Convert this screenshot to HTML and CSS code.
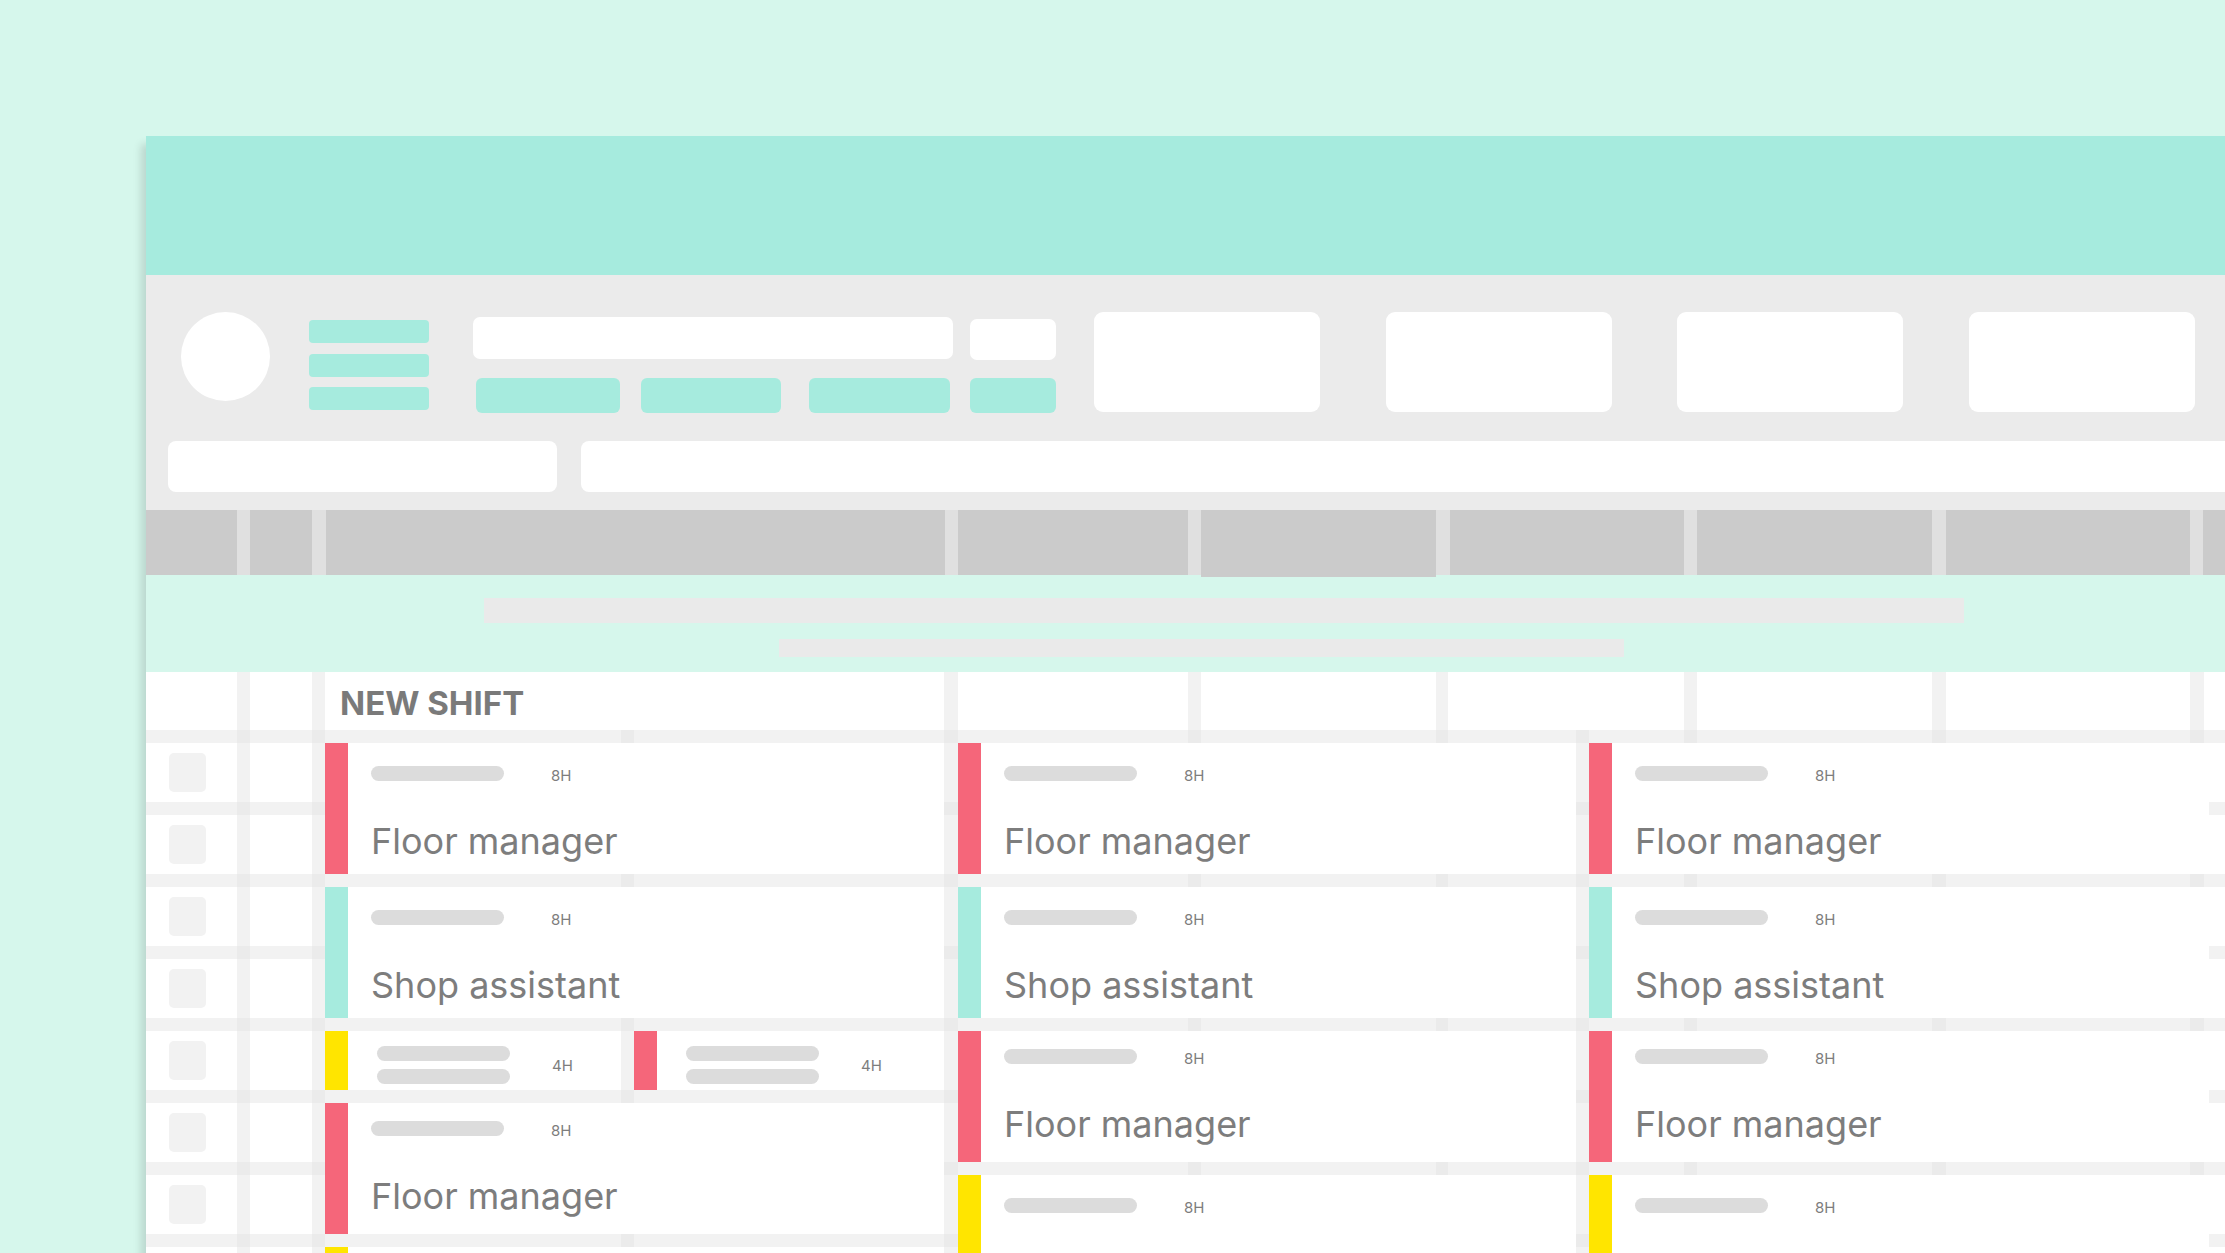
FILE: index.html
```html
<!DOCTYPE html>
<html lang="en">
<head>
<meta charset="utf-8">
<title>Shift planner</title>
<link rel="stylesheet" href="styles.css">
</head>
<body>
<div class="panel">
  <div class="topbar"></div>

  <div class="toolbar">
    <div class="toolbar__main">
      <div class="avatar"></div>
      <div class="menu"><span></span><span></span><span></span></div>
      <div class="controls">
        <div class="controls__top">
          <div class="field field--wide"></div>
          <div class="field field--small"></div>
        </div>
        <div class="controls__bottom">
          <div class="btn btn--1"></div>
          <div class="btn btn--2"></div>
          <div class="btn btn--3"></div>
          <div class="btn btn--4"></div>
        </div>
      </div>
      <div class="tiles">
        <div class="tile"></div>
        <div class="tile"></div>
        <div class="tile"></div>
        <div class="tile"></div>
      </div>
    </div>
    <div class="toolbar__search">
      <div class="input input--short"></div>
      <div class="input input--long"></div>
    </div>
  </div>

  <div class="days">
    <div class="day"></div>
    <div class="day"></div>
    <div class="day"></div>
    <div class="day"></div>
    <div class="day day--tall"></div>
    <div class="day"></div>
    <div class="day"></div>
    <div class="day"></div>
    <div class="day"></div>
  </div>

  <div class="notice">
    <div class="notice__bar notice__bar--1"></div>
    <div class="notice__bar notice__bar--2"></div>
  </div>

  <div class="board">
    <div class="hline hl-1"></div>
    <div class="hline hl-2"></div>
    <div class="hline hl-3"></div>
    <div class="hline hl-4"></div>
    <div class="hline hl-5"></div>
    <div class="hline hl-6"></div>
    <div class="hline hl-7"></div>
    <div class="hline hl-8"></div>

    <div class="vline vl-1"></div>
    <div class="vline vl-2"></div>
    <div class="vline vline--inner vl-3"></div>
    <div class="vline vl-4"></div>
    <div class="vline vl-5"></div>
    <div class="vline vl-6"></div>
    <div class="vline vline--inner vl-7"></div>
    <div class="vline vl-8"></div>
    <div class="vline vl-9"></div>
    <div class="vline vl-10"></div>

    <div class="board__title">NEW SHIFT</div>

    <div class="slot s-1"></div>
    <div class="slot s-2"></div>
    <div class="slot s-3"></div>
    <div class="slot s-4"></div>
    <div class="slot s-5"></div>
    <div class="slot s-6"></div>
    <div class="slot s-7"></div>
    <div class="slot s-8"></div>

    <!-- column A -->
    <div class="card card--pink col-a row-1">
      <div class="card__bar"></div>
      <div class="card__body">
        <div class="meta"><div class="pill"></div><span class="hours">8H</span></div>
        <div class="title">Floor manager</div>
      </div>
    </div>
    <div class="card card--teal col-a row-2">
      <div class="card__bar"></div>
      <div class="card__body">
        <div class="meta"><div class="pill"></div><span class="hours">8H</span></div>
        <div class="title">Shop assistant</div>
      </div>
    </div>
    <div class="card card--yellow card--half col-a-left row-3h">
      <div class="card__bar"></div>
      <div class="card__body">
        <div class="pills"><div class="pill"></div><div class="pill"></div></div>
        <span class="hours">4H</span>
      </div>
    </div>
    <div class="card card--pink card--half col-a-right row-3h">
      <div class="card__bar"></div>
      <div class="card__body">
        <div class="pills"><div class="pill"></div><div class="pill"></div></div>
        <span class="hours">4H</span>
      </div>
    </div>
    <div class="card card--pink card--up col-a row-4a">
      <div class="card__bar"></div>
      <div class="card__body">
        <div class="meta"><div class="pill"></div><span class="hours">8H</span></div>
        <div class="title">Floor manager</div>
      </div>
    </div>
    <div class="card card--yellow col-a row-5a">
      <div class="card__bar"></div>
      <div class="card__body"></div>
    </div>

    <!-- column B -->
    <div class="card card--pink col-b row-1">
      <div class="card__bar"></div>
      <div class="card__body">
        <div class="meta"><div class="pill"></div><span class="hours">8H</span></div>
        <div class="title">Floor manager</div>
      </div>
    </div>
    <div class="card card--teal col-b row-2">
      <div class="card__bar"></div>
      <div class="card__body">
        <div class="meta"><div class="pill"></div><span class="hours">8H</span></div>
        <div class="title">Shop assistant</div>
      </div>
    </div>
    <div class="card card--pink card--up col-b row-3">
      <div class="card__bar"></div>
      <div class="card__body">
        <div class="meta"><div class="pill"></div><span class="hours">8H</span></div>
        <div class="title">Floor manager</div>
      </div>
    </div>
    <div class="card card--yellow col-b row-4">
      <div class="card__bar"></div>
      <div class="card__body">
        <div class="meta"><div class="pill"></div><span class="hours">8H</span></div>
      </div>
    </div>

    <!-- column C -->
    <div class="card card--pink col-c row-1">
      <div class="card__bar"></div>
      <div class="card__body">
        <div class="meta"><div class="pill"></div><span class="hours">8H</span></div>
        <div class="title">Floor manager</div>
      </div>
    </div>
    <div class="card card--teal col-c row-2">
      <div class="card__bar"></div>
      <div class="card__body">
        <div class="meta"><div class="pill"></div><span class="hours">8H</span></div>
        <div class="title">Shop assistant</div>
      </div>
    </div>
    <div class="card card--pink card--up col-c row-3">
      <div class="card__bar"></div>
      <div class="card__body">
        <div class="meta"><div class="pill"></div><span class="hours">8H</span></div>
        <div class="title">Floor manager</div>
      </div>
    </div>
    <div class="card card--yellow col-c row-4">
      <div class="card__bar"></div>
      <div class="card__body">
        <div class="meta"><div class="pill"></div><span class="hours">8H</span></div>
      </div>
    </div>
  </div>
</div>
</body>
</html>
```

FILE: styles.css
```css
html, body {
  margin: 0;
  padding: 0;
  overflow: hidden;
}

body {
  width: 2225px;
  height: 1253px;
  background: #d6f7ec;
  font-family: Inter, "Liberation Sans", sans-serif;
  color: #7d7d7d;
}

.panel {
  margin: 136px 0 0 146px;
  width: 2150px;
  background: #ebebeb;
  box-shadow: -5px 8px 8px rgba(0, 0, 0, 0.13);
}

.topbar {
  height: 139px;
  background: #a6ebde;
}

/* ---------- toolbar ---------- */
.toolbar {
  padding: 37px 0 18px 0;
}

.toolbar__main {
  display: flex;
  align-items: flex-start;
  height: 100px;
  padding-left: 35px;
}

.avatar {
  width: 89px;
  height: 89px;
  border-radius: 50%;
  background: #fff;
  flex: none;
}

.menu {
  margin-left: 39px;
  padding-top: 8px;
  width: 120px;
  display: flex;
  flex-direction: column;
  gap: 10.5px;
  flex: none;
}

.menu span {
  display: block;
  height: 23px;
  border-radius: 4px;
  background: #a6ebde;
}

.controls {
  margin-left: 44px;
  width: 583px;
  flex: none;
}

.controls__top {
  display: flex;
  align-items: flex-start;
  padding-top: 5px;
}

.field {
  background: #fff;
  border-radius: 7px;
}

.field--wide {
  width: 480px;
  height: 42px;
}

.field--small {
  margin-left: 17px;
  margin-top: 2px;
  width: 86px;
  height: 41px;
}

.controls__bottom {
  display: flex;
  margin-top: 18px;
  padding-left: 3px;
}

.btn {
  height: 35px;
  border-radius: 6px;
  background: #a6ebde;
}

.btn--1 { width: 144px; }
.btn--2 { width: 140px; margin-left: 21px; }
.btn--3 { width: 140.5px; margin-left: 28px; }
.btn--4 { width: 86px; margin-left: 20.5px; }

.tiles {
  margin-left: 38px;
  display: flex;
  gap: 65.5px;
  flex: none;
}

.tile {
  width: 226px;
  height: 100px;
  border-radius: 9px;
  background: #fff;
}

.toolbar__search {
  display: flex;
  gap: 24px;
  margin-top: 29px;
  padding-left: 22px;
}

.input {
  height: 51px;
  border-radius: 8px;
  background: #fff;
}

.input--short { width: 389px; flex: none; }
.input--long { flex: 1; }

/* ---------- day headers ---------- */
.days {
  display: grid;
  grid-template-columns: 90.5px 62px 619px 229.5px 235px 234px 235px 244px 1fr;
  column-gap: 13.5px;
  align-items: start;
  height: 65px;
  background: #e0e0e0;
}

.day {
  height: 65px;
  background: #cbcbcb;
}

.day--tall {
  height: 66.5px;
}

/* ---------- notice band ---------- */
.notice {
  background: #d6f7ec;
  padding: 23px 0 15px;
}

.notice__bar {
  background: #eaeaea;
}

.notice__bar--1 {
  margin-left: 338px;
  width: 1480px;
  height: 25px;
}

.notice__bar--2 {
  margin-top: 16px;
  margin-left: 633px;
  width: 845px;
  height: 18px;
}

/* ---------- board ---------- */
.board {
  display: grid;
  background: #fff;
  grid-template-columns:
    90.5px 13.5px 62px 13px 296px 13px 310px 14px
    229.5px 13.5px 235px 12px 128px 13px 94.5px 13.5px
    235px 14px 244px 14px 5px 1fr;
  grid-template-rows: 58px repeat(8, 13px 59px);
}

.hline {
  grid-column: 1 / -1;
  background: #f2f2f2;
}

.hl-1 { grid-row: 2; }
.hl-2 { grid-row: 4; }
.hl-3 { grid-row: 6; }
.hl-4 { grid-row: 8; }
.hl-5 { grid-row: 10; }
.hl-6 { grid-row: 12; }
.hl-7 { grid-row: 14; }
.hl-8 { grid-row: 16; }

/* vertical lines: a touch darker where they cross the row separators */
.vline {
  grid-row: 1 / -1;
  background: repeating-linear-gradient(
    to bottom,
    #f2f2f2 0 58px,
    #ebebeb 58px 71px,
    #f2f2f2 71px 72px
  );
}

.vline--inner {
  grid-row: 2 / -1;
  background: repeating-linear-gradient(
    to bottom,
    #ebebeb 0 13px,
    #f2f2f2 13px 72px
  );
}

.vl-1 { grid-column: 2; }
.vl-2 { grid-column: 4; }
.vl-3 { grid-column: 6; }
.vl-4 { grid-column: 8; }
.vl-5 { grid-column: 10; }
.vl-6 { grid-column: 12; }
.vl-7 { grid-column: 14; }
.vl-8 { grid-column: 16; }
.vl-9 { grid-column: 18; }
.vl-10 { grid-column: 20; }

.board__title {
  grid-row: 1;
  grid-column: 5 / 8;
  align-self: start;
  margin-top: 14.5px;
  padding-left: 15px;
  font-size: 33px;
  line-height: 33px;
  font-weight: 700;
  color: #7a7a7a;
  white-space: nowrap;
}

.slot {
  grid-column: 1;
  align-self: center;
  width: 37px;
  height: 39px;
  margin-left: 23px;
  border-radius: 5px;
  background: #f2f2f2;
}

.s-1 { grid-row: 3; }
.s-2 { grid-row: 5; }
.s-3 { grid-row: 7; }
.s-4 { grid-row: 9; }
.s-5 { grid-row: 11; }
.s-6 { grid-row: 13; }
.s-7 { grid-row: 15; }
.s-8 { grid-row: 17; }

/* card placement */
.col-a { grid-column: 5 / 8; }
.col-a-left { grid-column: 5 / 6; }
.col-a-right { grid-column: 7 / 8; }
.col-b { grid-column: 9 / 14; }
.col-c { grid-column: 15 / 22; }

.row-1 { grid-row: 3 / 6; }
.row-2 { grid-row: 7 / 10; }
.row-3 { grid-row: 11 / 14; }
.row-3h { grid-row: 11 / 12; }
.row-4 { grid-row: 15 / 18; }
.row-4a { grid-row: 13 / 16; }
.row-5a { grid-row: 17 / 18; }

/* cards */
.card {
  display: flex;
  background: #fff;
  min-width: 0;
  overflow: hidden;
}

.card__bar {
  width: 23px;
  flex: none;
}

.card--pink .card__bar { background: #f5667a; }
.card--teal .card__bar { background: #a6ebde; }
.card--yellow .card__bar { background: #ffe500; }

.card__body {
  padding: 23px 0 0 23px;
}

.card--up .card__body {
  padding-top: 18px;
}

.meta {
  display: flex;
  align-items: center;
  height: 15px;
}

.pill {
  width: 133px;
  height: 15px;
  border-radius: 8px;
  background: #dcdcdc;
  flex: none;
}

.hours {
  margin-left: 47px;
  margin-top: 4px;
  font-size: 15px;
  line-height: 15px;
  color: #7d7d7d;
}

.title {
  margin-top: 42px;
  font-size: 36px;
  line-height: 36px;
  font-weight: 400;
  color: #7d7d7d;
  white-space: nowrap;
}

.card--half .card__body {
  display: flex;
  align-items: center;
  padding: 15px 0 0 29px;
  align-self: flex-start;
}

.pills {
  display: flex;
  flex-direction: column;
  gap: 8px;
}

.card--half .hours {
  margin-left: 42px;
  margin-top: 0;
}
```
